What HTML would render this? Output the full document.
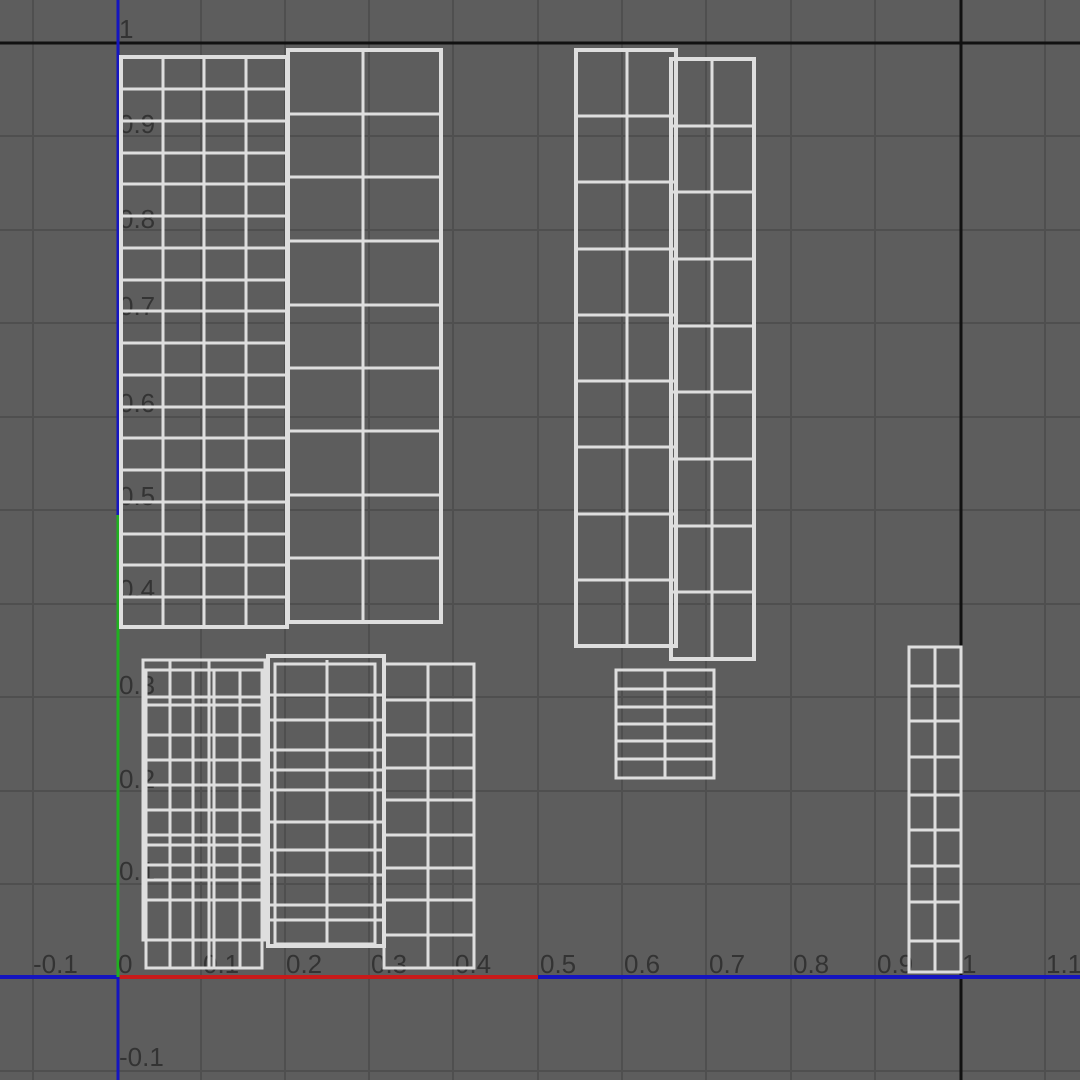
<!DOCTYPE html>
<html><head><meta charset="utf-8"><style>html,body{margin:0;padding:0;background:#5d5d5d}svg{display:block}text{font-family:"Liberation Sans",Arial,sans-serif;font-size:26px;fill:#333}</style></head><body>
<svg width="1080" height="1080" viewBox="0 0 1080 1080" xmlns="http://www.w3.org/2000/svg">
<rect width="1080" height="1080" fill="#5d5d5d"/>
<g stroke="#4f4f4f" stroke-width="2">
<line x1="33" y1="0" x2="33" y2="1080"/><line x1="201" y1="0" x2="201" y2="1080"/><line x1="285" y1="0" x2="285" y2="1080"/><line x1="369" y1="0" x2="369" y2="1080"/><line x1="453" y1="0" x2="453" y2="1080"/><line x1="538" y1="0" x2="538" y2="1080"/><line x1="622" y1="0" x2="622" y2="1080"/><line x1="706" y1="0" x2="706" y2="1080"/><line x1="791" y1="0" x2="791" y2="1080"/><line x1="875" y1="0" x2="875" y2="1080"/><line x1="1045" y1="0" x2="1045" y2="1080"/>
<line x1="0" y1="136" x2="1080" y2="136"/><line x1="0" y1="230" x2="1080" y2="230"/><line x1="0" y1="323" x2="1080" y2="323"/><line x1="0" y1="417" x2="1080" y2="417"/><line x1="0" y1="510" x2="1080" y2="510"/><line x1="0" y1="604" x2="1080" y2="604"/><line x1="0" y1="697" x2="1080" y2="697"/><line x1="0" y1="791" x2="1080" y2="791"/><line x1="0" y1="884" x2="1080" y2="884"/><line x1="0" y1="1071" x2="1080" y2="1071"/>
</g>
<line x1="0" y1="43" x2="1080" y2="43" stroke="#111" stroke-width="3"/>
<line x1="961" y1="0" x2="961" y2="1080" stroke="#111" stroke-width="3"/>
<line x1="0" y1="977" x2="1080" y2="977" stroke="#1515c0" stroke-width="4"/>
<line x1="118" y1="977" x2="538" y2="977" stroke="#c81a1a" stroke-width="4"/>
<line x1="118" y1="0" x2="118" y2="1080" stroke="#1515c0" stroke-width="3"/>
<line x1="118" y1="515" x2="118" y2="977" stroke="#20b020" stroke-width="3"/>
<text x="119" y="38">1</text><text x="119" y="133">0.9</text><text x="119" y="228">0.8</text><text x="119" y="315">0.7</text><text x="119" y="412">0.6</text><text x="119" y="505">0.5</text><text x="119" y="598">0.4</text><text x="119" y="694">0.3</text><text x="119" y="788">0.2</text><text x="119" y="880">0.1</text><text x="119" y="1066">-0.1</text>
<text x="33" y="973">-0.1</text><text x="118" y="973">0</text><text x="203" y="973">0.1</text><text x="286" y="973">0.2</text><text x="371" y="973">0.3</text><text x="455" y="973">0.4</text><text x="540" y="973">0.5</text><text x="624" y="973">0.6</text><text x="709" y="973">0.7</text><text x="793" y="973">0.8</text><text x="877" y="973">0.9</text><text x="962" y="973">1</text><text x="1046" y="973">1.1</text>
<g fill="none" stroke="#dedede" stroke-width="3">
<rect x="121" y="57" width="166" height="570" stroke-width="4"/>
<path d="M163 57V627M204 57V627M246 57V627M121 89H287M121 121H287M121 153H287M121 184H287M121 216H287M121 248H287M121 280H287M121 311H287M121 343H287M121 375H287M121 407H287M121 438H287M121 470H287M121 502H287M121 534H287M121 565H287M121 597H287"/>
<rect x="288" y="50" width="153" height="572" stroke-width="4"/>
<path d="M363 50V622M288 114H441M288 177H441M288 241H441M288 305H441M288 368H441M288 431H441M288 495H441M288 558H441"/>
<rect x="576" y="50" width="100" height="596" stroke-width="4"/>
<path d="M627 50V646M576 116H676M576 182H676M576 249H676M576 315H676M576 381H676M576 447H676M576 514H676M576 580H676"/>
<rect x="671" y="59" width="83" height="600" stroke-width="4"/>
<path d="M712 59V659M671 126H754M671 192H754M671 259H754M671 326H754M671 392H754M671 459H754M671 526H754M671 592H754"/>
<rect x="616" y="670" width="98" height="108"/>
<path d="M665 670V778M616 689H714M616 707H714M616 724H714M616 741H714M616 759H714"/>
<rect x="909" y="647" width="52" height="325"/>
<path d="M935 647V972M909 686H961M909 721H961M909 757H961M909 795H961M909 830H961M909 866H961M909 902H961M909 941H961"/>
<rect x="143" y="660" width="122" height="280"/>
<rect x="146" y="670" width="116" height="298"/>
<path d="M170 660V968M193 670V968M209 660V968M214 670V968M240 670V968M143 697H265M143 705H265M143 735H265M143 760H265M143 785H265M143 810H265M143 835H265M143 845H265M143 865H265M143 880H265M143 900H265M143 940H265"/>
<rect x="268" y="656" width="116" height="290" stroke-width="4"/>
<rect x="275" y="664" width="100" height="280"/>
<path d="M327 660V944M270 695H384M270 720H384M270 750H384M270 770H384M270 790H384M270 822H384M270 850H384M270 875H384M270 905H384M270 920H384"/>
<rect x="384" y="664" width="90" height="304"/>
<path d="M428 664V968M384 700H474M384 735H474M384 768H474M384 800H474M384 835H474M384 868H474M384 900H474M384 935H474"/>
</g>
</svg>
</body></html>
